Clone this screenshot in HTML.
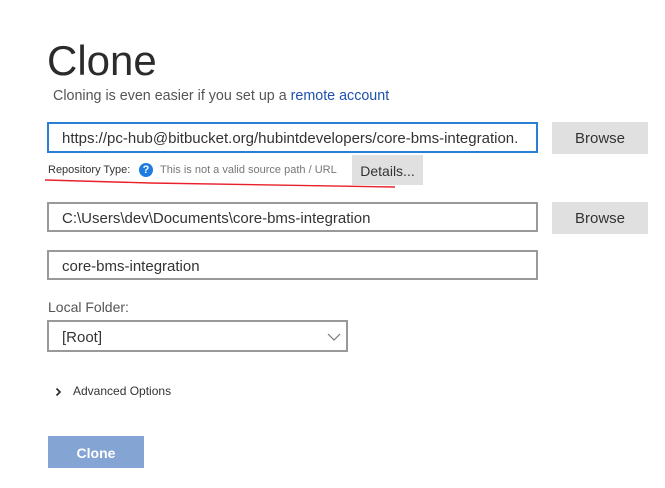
<!DOCTYPE html>
<html><head><meta charset="utf-8"><style>
body{margin:0;width:665px;height:488px;background:#fff;position:relative;overflow:hidden;font-family:"Segoe UI","Liberation Sans",sans-serif;color:#333}
.a{position:absolute;white-space:nowrap}
.box{position:absolute;box-sizing:border-box;border:2px solid #999;background:#fff;font-size:15px;padding-left:13px;line-height:29px;overflow:hidden;white-space:nowrap}
.btn{position:absolute;background:#e0e0e0;font-size:15px;text-align:center;line-height:34px;color:#333}
</style></head><body>
<div class="a" style="left:47px;top:35px;font-size:42px;color:#2b2b2b;line-height:52px">Clone</div>
<div class="a" style="left:53px;top:88px;font-size:14.3px;color:#555">Cloning is even easier if you set up a <span style="color:#1f50b0">remote account</span></div>
<div class="box" style="left:47px;top:122px;width:491px;height:31px;border-color:#2a7fd4;color:#333">https://pc-hub@bitbucket.org/hubintdevelopers/core-bms-integration.</div>
<div class="btn" style="left:552px;top:122px;width:96px;height:32px">Browse</div>
<div class="a" style="left:48px;top:164px;font-size:11px;color:#333">Repository Type:</div>
<div class="a" style="left:139px;top:163px;width:14px;height:14px;border-radius:50%;background:#1e7be0;color:#fff;font-size:11px;font-weight:bold;text-align:center;line-height:14px">?</div>
<div class="a" style="left:160px;top:164px;font-size:11px;color:#777">This is not a valid source path / URL</div>
<div class="btn" style="left:352px;top:155px;width:71px;height:30px;line-height:32px;font-size:14px">Details...</div>
<svg class="a" style="left:0;top:0" width="665" height="488"><path d="M45 180 L150 183 L395 187" stroke="#e8202a" stroke-width="1.4" fill="none"/></svg>
<div class="box" style="left:47px;top:202px;width:491px;height:30px">C:\Users\dev\Documents\core-bms-integration</div>
<div class="btn" style="left:552px;top:202px;width:96px;height:32px">Browse</div>
<div class="box" style="left:47px;top:250px;width:491px;height:30px">core-bms-integration</div>
<div class="a" style="left:48px;top:299px;font-size:14px;color:#555">Local Folder:</div>
<div class="box" style="left:47px;top:320px;width:301px;height:32px;line-height:31px">[Root]</div>
<svg class="a" style="left:327px;top:333px" width="14" height="8"><path d="M1 1 L7 7 L13 1" stroke="#777" stroke-width="1.2" fill="none"/></svg>
<svg class="a" style="left:55px;top:388px" width="7" height="8"><path d="M1.5 0.5 L5 4 L1.5 7.5" stroke="#222" stroke-width="1.6" fill="none"/></svg>
<div class="a" style="left:73px;top:384px;font-size:12px;color:#333">Advanced Options</div>
<div class="a" style="left:48px;top:436px;width:96px;height:32px;background:#84a4d4;color:#fff;font-weight:bold;font-size:14px;text-align:center;line-height:34px">Clone</div>
</body></html>
